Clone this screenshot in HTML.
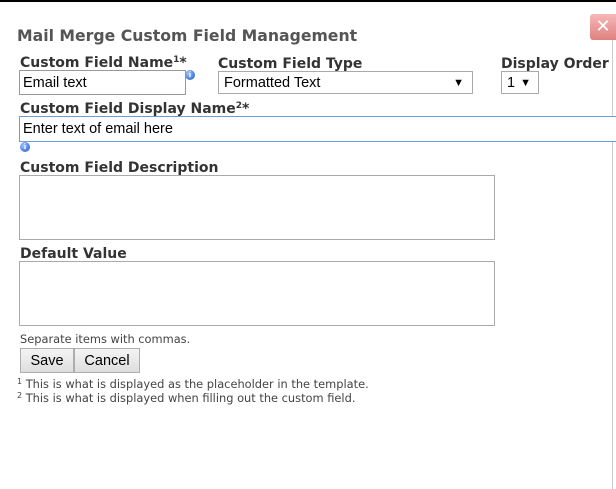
<!DOCTYPE html>
<html><head><style>
body{margin:0;width:616px;height:489px;background:#fff;position:relative;overflow:hidden;font-family:"DejaVu Sans",Verdana,sans-serif;}
.a{position:absolute;}
.top{left:0;top:0;width:616px;height:2px;background:#000;}
h1{position:absolute;left:17px;top:26px;margin:0;font-size:15.7px;font-weight:bold;color:#555;}
.lbl{position:absolute;font-size:14px;font-weight:bold;color:#333;}
.lbl sup{font-size:9px;vertical-align:5px;}
.inp{position:absolute;border:1px solid #999;background:#fff;font-family:"Liberation Sans",Arial,sans-serif;font-size:14.5px;color:#000;box-sizing:border-box;padding:4px 3px;line-height:16px;}
.sel{position:absolute;border:1px solid #aaa;background:#fff;font-family:"Liberation Sans",Arial,sans-serif;font-size:14.5px;box-sizing:border-box;padding:3px 5px;line-height:17px;}
.info{position:absolute;width:10px;height:10px;border-radius:50%;background:radial-gradient(circle at 35% 35%,#9bc4ff,#1e56c8);color:#fff;font-size:8px;line-height:10px;text-align:center;font-weight:bold;font-family:"Liberation Serif",serif;}
.ta{position:absolute;border:1px solid #aaa;box-sizing:border-box;}
.btn{position:absolute;top:348px;height:25px;border:1px solid #adadad;background:linear-gradient(#f4f4f4,#dedede);font-family:"Liberation Sans",Arial,sans-serif;font-size:14.5px;line-height:25px;text-align:center;box-sizing:border-box;}
.fn{position:absolute;left:17px;font-size:11.4px;color:#444;}
.fn sup{font-size:8px;vertical-align:4px;}
</style></head><body>
<div class="a top"></div>
<div class="a" style="left:590px;top:14px;width:26px;height:26px;background:linear-gradient(#f6b8b8,#e08080);border-radius:3px 0 0 3px;color:#fff;font-size:18px;font-weight:bold;line-height:26px;text-align:center;">✕</div>
<div class="a" style="left:612px;top:40px;width:1px;height:449px;background:#ccc;"></div>
<h1>Mail Merge Custom Field Management</h1>
<div class="lbl" style="left:20px;top:55px;">Custom Field Name<sup>1</sup>*</div>
<div class="lbl" style="left:218px;top:56px;">Custom Field Type</div>
<div class="lbl" style="left:501px;top:56px;">Display Order</div>
<div class="inp" style="left:19px;top:70px;width:167px;height:25px;">Email text</div>
<div class="info" style="left:185px;top:70px;">i</div>
<div class="sel" style="left:218px;top:71px;width:255px;height:23px;">Formatted Text<span style="position:absolute;right:8px;font-size:11px;">▼</span></div>
<div class="sel" style="left:501px;top:71px;width:38px;height:23px;">1<span style="position:absolute;right:7px;font-size:11px;">▼</span></div>
<div class="lbl" style="left:20px;top:101px;">Custom Field Display Name<sup>2</sup>*</div>
<div class="inp" style="left:19px;top:116px;width:600px;height:26px;border-color:#6b9ae0;">Enter text of email here</div>
<div class="info" style="left:20px;top:142px;">i</div>
<div class="lbl" style="left:20px;top:160px;">Custom Field Description</div>
<div class="ta" style="left:19px;top:175px;width:476px;height:65px;"></div>
<div class="lbl" style="left:20px;top:246px;">Default Value</div>
<div class="ta" style="left:19px;top:261px;width:476px;height:65px;"></div>
<div class="fn" style="top:332px;left:20px;">Separate items with commas.</div>
<div class="btn" style="left:20px;width:54px;">Save</div>
<div class="btn" style="left:74px;width:66px;">Cancel</div>
<div class="fn" style="top:377px;"><sup>1</sup> This is what is displayed as the placeholder in the template.</div>
<div class="fn" style="top:391px;"><sup>2</sup> This is what is displayed when filling out the custom field.</div>
</body></html>
